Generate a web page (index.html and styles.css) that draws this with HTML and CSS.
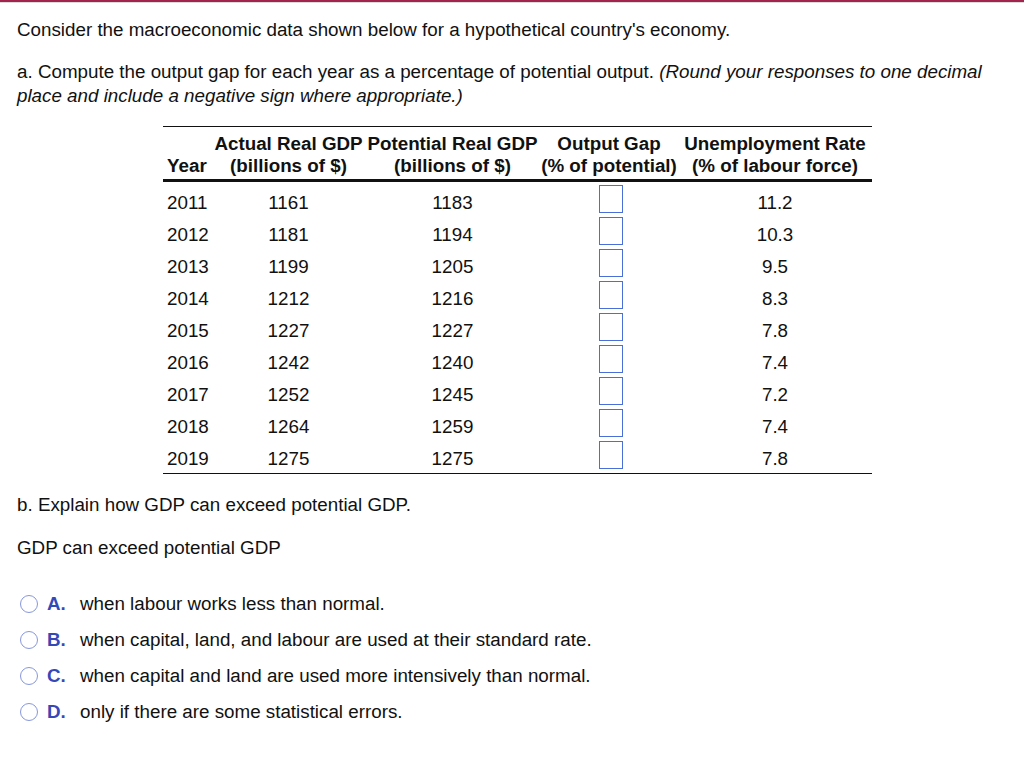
FILE: index.html
```html
<!DOCTYPE html>
<html>
<head>
<meta charset="utf-8">
<link rel="stylesheet" href="styles.css">
</head>
<body>
<div class="topbar"></div>
<div class="content">
  <p class="intro">Consider the macroeconomic data shown below for a hypothetical country's economy.</p>
  <p class="part-a">a. Compute the output gap for each year as a percentage of potential output. <em>(Round your responses to one decimal place and include a negative sign where appropriate.)</em></p>
  <table class="data">
    <colgroup>
      <col class="col-year">
      <col class="col-actual">
      <col class="col-potential">
      <col class="col-gap">
      <col class="col-unemp">
    </colgroup>
    <thead>
      <tr class="h1">
        <th class="c-year"></th>
        <th>Actual Real GDP</th>
        <th>Potential Real GDP</th>
        <th>Output Gap</th>
        <th>Unemployment Rate</th>
      </tr>
      <tr class="h2">
        <th class="c-year">Year</th>
        <th>(billions of $)</th>
        <th>(billions of $)</th>
        <th>(% of potential)</th>
        <th>(% of labour force)</th>
      </tr>
    </thead>
    <tbody>
      <tr><td class="c-year">2011</td><td>1161</td><td>1183</td><td><span class="box"></span></td><td>11.2</td></tr>
      <tr><td class="c-year">2012</td><td>1181</td><td>1194</td><td><span class="box"></span></td><td>10.3</td></tr>
      <tr><td class="c-year">2013</td><td>1199</td><td>1205</td><td><span class="box"></span></td><td>9.5</td></tr>
      <tr><td class="c-year">2014</td><td>1212</td><td>1216</td><td><span class="box"></span></td><td>8.3</td></tr>
      <tr><td class="c-year">2015</td><td>1227</td><td>1227</td><td><span class="box"></span></td><td>7.8</td></tr>
      <tr><td class="c-year">2016</td><td>1242</td><td>1240</td><td><span class="box"></span></td><td>7.4</td></tr>
      <tr><td class="c-year">2017</td><td>1252</td><td>1245</td><td><span class="box"></span></td><td>7.2</td></tr>
      <tr><td class="c-year">2018</td><td>1264</td><td>1259</td><td><span class="box"></span></td><td>7.4</td></tr>
      <tr><td class="c-year">2019</td><td>1275</td><td>1275</td><td><span class="box"></span></td><td>7.8</td></tr>
    </tbody>
  </table>
  <p class="part-b">b. Explain how GDP can exceed potential GDP.</p>
  <p class="stem">GDP can exceed potential GDP</p>
  <ul class="options">
    <li><span class="radio"></span><span class="letter">A.</span><span class="opt-text">when labour works less than normal.</span></li>
    <li><span class="radio"></span><span class="letter">B.</span><span class="opt-text">when capital, land, and labour are used at their standard rate.</span></li>
    <li><span class="radio"></span><span class="letter">C.</span><span class="opt-text">when capital and land are used more intensively than normal.</span></li>
    <li><span class="radio"></span><span class="letter">D.</span><span class="opt-text">only if there are some statistical errors.</span></li>
  </ul>
</div>
</body>
</html>
```
FILE: styles.css
```css
html, body {
  margin: 0;
  padding: 0;
  background: #fff;
}
body {
  font-family: "Liberation Sans", Arial, sans-serif;
  font-size: 18.8px;
  color: #111;
}
.topbar {
  height: 2px;
  background: #a3244c;
  border-bottom: 1px solid #dcdcdc;
}
.content {
  padding: 0 10px 0 17px;
}
p {
  margin: 0;
}
.intro {
  margin-top: 15px;
  line-height: 24px;
}
.part-a {
  margin-top: 18px;
  line-height: 24px;
}
.data {
  border-collapse: collapse;
  table-layout: fixed;
  margin: 18px 0 0 146px;
  width: 709px;
  border-top: 1px solid #111;
  border-bottom: 1px solid #111;
}
.col-year { width: 49px; }
.col-actual { width: 153px; }
.col-potential { width: 175px; }
.col-gap { width: 138px; }
.col-unemp { width: 194px; }
.data th {
  font-weight: bold;
  text-align: center;
  padding: 0;
  line-height: 22px;
  white-space: nowrap;
}
.data .h1 th {
  padding-top: 6px;
}
.data .h2 th {
  border-bottom: 3px solid #111;
  padding-bottom: 2px;
}
.data td {
  text-align: center;
  padding: 2px 0;
  height: 28px;
  line-height: 28px;
  vertical-align: middle;
  white-space: nowrap;
}
.data tbody tr:first-child td {
  padding-top: 7px;
}
.data tbody tr:last-child td {
  padding-bottom: 0;
}
.data .c-year {
  text-align: left;
  padding-left: 4px;
}
.box {
  display: inline-block;
  box-sizing: border-box;
  width: 24px;
  height: 28px;
  border: 1.5px solid #4a6fd8;
  vertical-align: top;
  margin: -4px 0 0 4px;
}
.part-b {
  margin-top: 19px;
  line-height: 24px;
}
.stem {
  margin-top: 19px;
  line-height: 24px;
}
.options {
  list-style: none;
  margin: 26px 0 0 0;
  padding: 0;
}
.options li {
  display: flex;
  align-items: center;
  height: 36px;
}
.radio {
  box-sizing: border-box;
  width: 18px;
  height: 18px;
  border: 1.5px solid #8797dc;
  border-radius: 50%;
  margin-left: 3px;
  flex: none;
}
.letter {
  color: #3548b8;
  font-weight: bold;
  margin-left: 9px;
  width: 33px;
}
.opt-text {
  color: #111;
}
```
